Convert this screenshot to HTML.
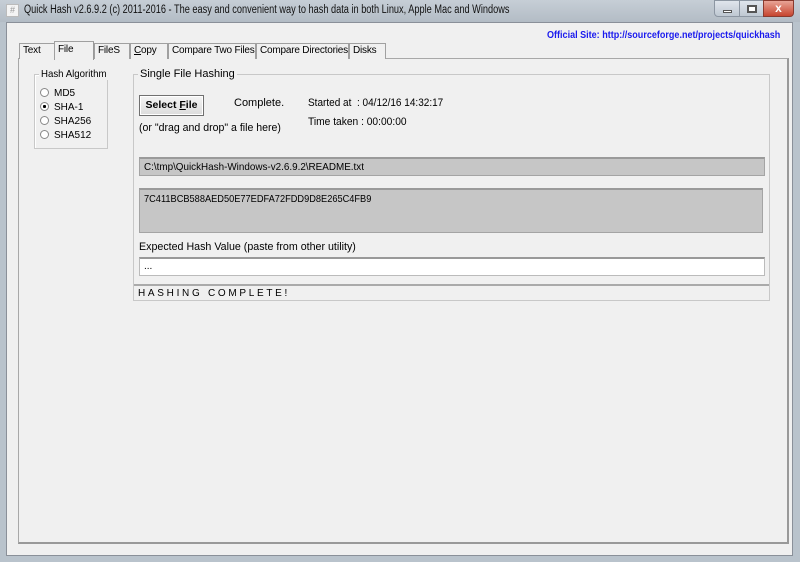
<!DOCTYPE html>
<html><head><style>
*{box-sizing:border-box;margin:0;padding:0}
body{width:800px;height:562px;overflow:hidden;background:#b9c3cc;font-family:"Liberation Sans",sans-serif;font-size:11px;color:#000;position:relative}
.a{position:absolute;white-space:nowrap}
.title{left:0;top:0;width:800px;height:22px;background:linear-gradient(#c6ced6,#b3bcc5);}
.client{left:6px;top:22px;width:787px;height:534px;background:#f0f0f0;border:1px solid #8a9099}
.tab{top:43px;height:16px;border:1px solid #a0a0a0;border-bottom:none;background:#f0f0f0;padding:1px 3px;font-size:10px;letter-spacing:-0.2px;overflow:hidden}
.field{background:#c6c6c6;border:1px solid #a4a4a4;border-top:2px solid #9a9a9a;padding:3px 4px}
.s{display:inline-block;transform-origin:left center}
</style></head><body>
<div class="a title"></div>
<div class="a" style="left:6px;top:4px;width:13px;height:13px;background:#f4f4f4;border:1px solid #bbb;font-size:9px;color:#999;text-align:center;line-height:11px">#</div>
<div class="a" style="left:24px;top:4px;font-size:11.5px;color:#111"><span class="s" style="transform:scaleX(0.8)">Quick Hash v2.6.9.2 (c) 2011-2016 - The easy and convenient way to hash data in both Linux, Apple Mac and Windows</span></div>
<div class="a" style="left:714px;top:0;width:26px;height:17px;border:1px solid #8c96a2;border-radius:0 0 0 4px;background:linear-gradient(#dfe5ec,#bfc8d2)"><div class="a" style="left:8px;top:9px;width:9px;height:3px;background:#fff;border:1px solid #555"></div></div>
<div class="a" style="left:739px;top:0;width:25px;height:17px;border:1px solid #8c96a2;background:linear-gradient(#dfe5ec,#bfc8d2)"><div class="a" style="left:7px;top:4px;width:10px;height:8px;border:2px solid #555;background:#fff"></div></div>
<div class="a" style="left:763px;top:0;width:31px;height:17px;border:1px solid #8a3a2e;border-radius:0 0 4px 0;background:linear-gradient(#e8a496,#c7452f);color:#fff;font-weight:bold;font-size:12px;text-align:center;line-height:15px">x</div>
<div class="a client"></div>
<div class="a" style="left:547px;top:29px;color:#1a1aee;font-weight:bold;font-size:10.5px"><span class="s" style="transform:scaleX(0.86)">Official Site: http://sourceforge.net/projects/quickhash</span></div>
<div class="a" style="left:18px;top:58px;width:771px;height:486px;border:1px solid #a8a8a8;border-right:2px solid #999;border-bottom:2px solid #999"></div>
<div class="a tab" style="left:19px;width:36px">Text</div>
<div class="a tab" style="left:54px;top:41px;height:19px;width:40px;background:#f0f0f0;border-right:1px solid #999;padding-top:2px">File</div>
<div class="a tab" style="left:94px;width:36px">FileS</div>
<div class="a tab" style="left:130px;width:38px"><u>C</u>opy</div>
<div class="a tab" style="left:168px;width:88px">Compare Two Files</div>
<div class="a tab" style="left:256px;width:93px">Compare Directories</div>
<div class="a tab" style="left:349px;width:37px">Disks</div>
<div class="a" style="left:34px;top:74px;width:74px;height:75px;border:1px solid #c8c8c8;box-shadow:1px 1px 0 #fff inset"></div>
<div class="a" style="left:39px;top:68px;background:#f0f0f0;padding:0 2px;font-size:10.5px"><span class="s" style="transform:scaleX(0.92)">Hash Algorithm</span></div>
<div class="a" style="left:40px;top:87px;line-height:14px;font-size:10px">
<div><span style="display:inline-block;width:9px;height:9px;border:1px solid #888;border-radius:50%;background:#fff;margin-right:5px;vertical-align:-1px"></span>MD5</div>
<div><span style="display:inline-block;width:9px;height:9px;border:1px solid #888;border-radius:50%;background:radial-gradient(#000 30%,#fff 36%);margin-right:5px;vertical-align:-1px"></span>SHA-1</div>
<div><span style="display:inline-block;width:9px;height:9px;border:1px solid #888;border-radius:50%;background:#fff;margin-right:5px;vertical-align:-1px"></span>SHA256</div>
<div><span style="display:inline-block;width:9px;height:9px;border:1px solid #888;border-radius:50%;background:#fff;margin-right:5px;vertical-align:-1px"></span>SHA512</div>
</div>
<div class="a" style="left:133px;top:74px;width:637px;height:227px;border:1px solid #c8c8c8"></div>
<div class="a" style="left:138px;top:68px;background:#f0f0f0;padding:0 2px;font-size:11px">Single File Hashing</div>
<div class="a" style="left:139px;top:95px;width:65px;height:21px;border:1px solid #707070;background:linear-gradient(#f4f4f4,#dcdcdc);text-align:center;line-height:19px;font-weight:bold;font-size:10.5px;box-shadow:0 0 0 1px #fff inset">Select <u>F</u>ile</div>
<div class="a" style="left:234px;top:97px">Complete.</div>
<div class="a" style="left:308px;top:97px"><span class="s" style="transform:scaleX(0.91)">Started at &nbsp;: 04/12/16 14:32:17</span></div>
<div class="a" style="left:308px;top:116px"><span class="s" style="transform:scaleX(0.93)">Time taken : 00:00:00</span></div>
<div class="a" style="left:139px;top:122px"><span class="s" style="transform:scaleX(0.96)">(or "drag and drop" a file here)</span></div>
<div class="a field" style="left:139px;top:157px;width:626px;height:19px;padding-top:2px;font-size:10.5px"><span class="s" style="transform:scaleX(0.94)">C:\tmp\QuickHash-Windows-v2.6.9.2\README.txt</span></div>
<div class="a field" style="left:139px;top:188px;width:624px;height:45px;font-size:10.5px;padding-top:3px"><span class="s" style="transform:scaleX(0.88)">7C411BCB588AED50E77EDFA72FDD9D8E265C4FB9</span></div>
<div class="a" style="left:139px;top:241px;font-size:11px"><span class="s" style="transform:scaleX(0.97)">Expected Hash Value (paste from other utility)</span></div>
<div class="a" style="left:139px;top:257px;width:626px;height:19px;background:#fff;border:1px solid #bbb;border-top:2px solid #999;padding:2px 4px;font-size:10px">...</div>
<div class="a" style="left:134px;top:284px;width:635px;height:16px;border-top:2px solid #aaa;padding:2px 4px;font-size:10px;letter-spacing:2.7px">HASHING COMPLETE!</div>
</body></html>
